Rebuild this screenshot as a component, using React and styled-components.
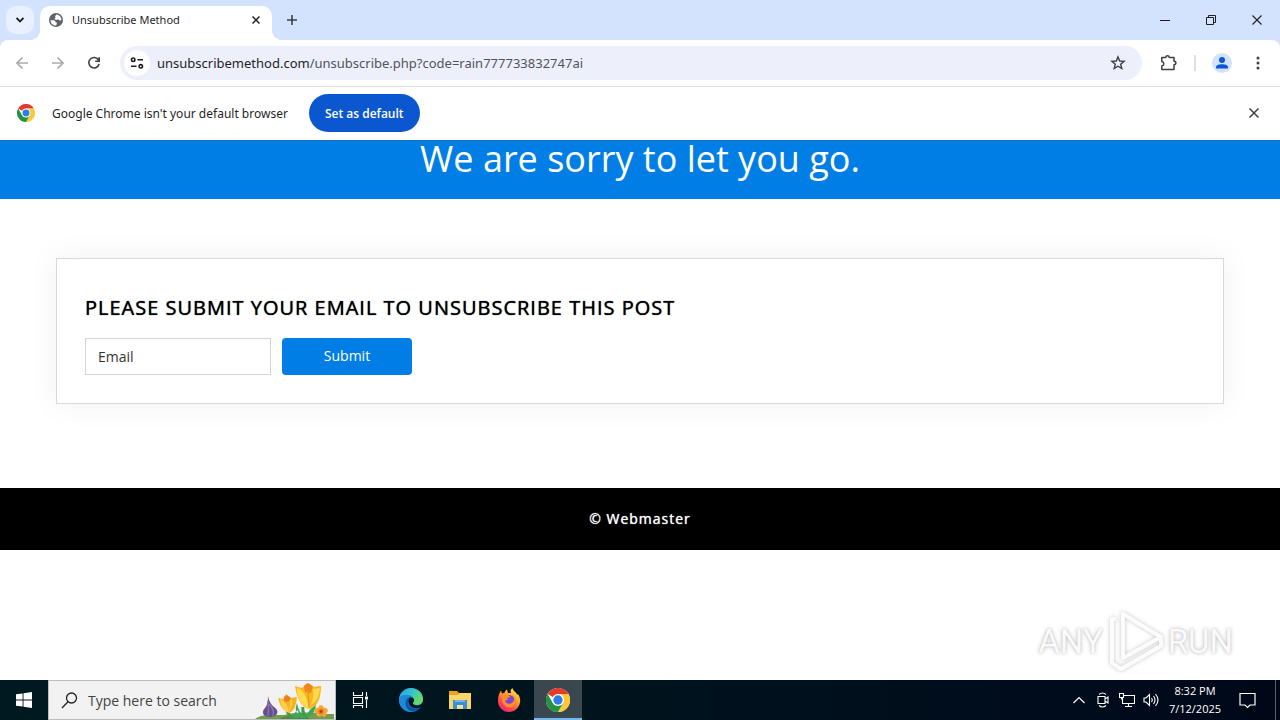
import React from 'react'
import styled, { createGlobalStyle } from 'styled-components'

const GlobalStyle = createGlobalStyle`
  * {
    box-sizing: border-box;
  }
  body {
    margin: 0;
    background: #fff;
    font-family: 'Open Sans', 'Noto Sans', sans-serif;
  }
  button, input {
    font-family: inherit;
    margin: 0;
  }
  svg {
    display: block;
    flex: none;
  }
`

const Screen = styled.div`
  min-height: 100vh;
  display: flex;
  flex-direction: column;
`

const PlainButton = styled.button`
  display: flex;
  align-items: center;
  justify-content: center;
  padding: 0;
  border: 0;
  background: transparent;
  color: ${props => props.$color || '#1f1f1f'};
`

/* tab strip */

const TabStrip = styled.div`
  display: flex;
  align-items: flex-end;
  height: 40px;
  padding-left: 6px;
  background: #d3e3fd;
`

const TabSearch = styled(PlainButton)`
  width: 28px;
  height: 28px;
  margin: 0 6px 6px 0;
  border-radius: 10px;
  background: #e9f1fe;
`

const Tab = styled.div`
  position: relative;
  display: flex;
  align-items: center;
  width: 232px;
  height: 34px;
  padding: 0 8px 6px;
  border-radius: 10px 10px 0 0;
  background: #fff;
  &::before, &::after {
    content: '';
    position: absolute;
    bottom: 0;
    width: 10px;
    height: 10px;
  }
  &::before {
    left: -10px;
    background: radial-gradient(circle at 0 0, transparent 10px, #fff 10px);
  }
  &::after {
    right: -10px;
    background: radial-gradient(circle at 100% 0, transparent 10px, #fff 10px);
  }
`

const TabTitle = styled.span`
  flex: 1;
  margin-left: 8px;
  font-family: 'Noto Sans', sans-serif;
  font-size: 11px;
  line-height: 16px;
  color: #1f1f1f;
`

const TabClose = styled(PlainButton)`
  width: 16px;
  height: 16px;
`

const NewTab = styled(PlainButton)`
  width: 28px;
  height: 28px;
  margin: 0 0 6px 6px;
`

const WindowButtons = styled.div`
  display: flex;
  align-self: stretch;
  margin-left: auto;
`

const WindowButton = styled(PlainButton)`
  width: 46px;
`

/* toolbar */

const ToolbarBack = styled.div`
  background: #d3e3fd;
`

const Toolbar = styled.div`
  display: flex;
  align-items: center;
  height: 47px;
  padding: 0 4px;
  border-bottom: 1px solid #dfe2e8;
  border-radius: 8px 8px 0 0;
  background: #fff;
`

const ToolButton = styled(PlainButton)`
  width: 36px;
  height: 34px;
`

const AddressBar = styled.div`
  flex: 1;
  display: flex;
  align-items: center;
  height: 34px;
  margin: 0 8px;
  padding: 0 6px 0 4px;
  border-radius: 17px;
  background: #edf0fa;
`

const SiteInfo = styled(PlainButton)`
  width: 26px;
  height: 26px;
  border-radius: 50%;
  background: #fff;
`

const Address = styled.div`
  flex: 1;
  margin-left: 7px;
  font-family: 'Noto Sans', sans-serif;
  font-size: 13px;
  line-height: 20px;
  color: #50545c;
  b {
    font-weight: 400;
    color: #1f1f1f;
  }
`

const Divider = styled.div`
  width: 2px;
  height: 16px;
  margin: 0 8px;
  background: #dcdfe8;
`

/* default browser bar */

const InfoBar = styled.div`
  display: flex;
  align-items: center;
  height: 53px;
  padding: 0 18px 1px 17px;
  font-family: 'Noto Sans', sans-serif;
  font-size: 12px;
  color: #1f1f1f;
`

const InfoText = styled.span`
  margin: 0 21px 0 17px;
`

const DefaultButton = styled.button`
  height: 38px;
  padding: 0 16px;
  border: 0;
  border-radius: 19px;
  background: #0b57d0;
  color: #fff;
  font-family: 'Open Sans', sans-serif;
  font-size: 12px;
  font-weight: 600;
`

const InfoClose = styled(PlainButton)`
  width: 16px;
  height: 16px;
  margin-left: auto;
`

/* page */

const Page = styled.main`
  position: relative;
  flex: 1;
  background: #fff;
`

const Banner = styled.header`
  padding-bottom: 21px;
  background: #007ee6;
  box-shadow: inset 0 1px 0 #1a6fb8;
`

const BannerTitle = styled.h1`
  margin: 0;
  font-size: 36px;
  font-weight: 400;
  line-height: 38px;
  text-align: center;
  color: #fff;
`

const Card = styled.section`
  margin: 59px 56px 84px;
  padding: 36px 28px 28px;
  border: 1px solid #d9d9d9;
  background: #fff;
  box-shadow: 0 0 30px rgba(0, 0, 0, .06);
`

const CardTitle = styled.h2`
  margin: 0 0 17px;
  font-size: 20px;
  font-weight: 500;
  line-height: 26px;
  letter-spacing: 1px;
  text-transform: uppercase;
  color: #000;
  text-shadow: 0 0 1px #000;
`

const Form = styled.form`
  display: flex;
  gap: 11px;
`

const EmailInput = styled.input`
  width: 186px;
  height: 37px;
  padding: 0 12px;
  border: 1px solid #d4d4d4;
  border-radius: 0;
  background: #fff;
  font-size: 14px;
  color: #333;
  &::placeholder {
    color: #333;
    opacity: 1;
  }
`

const SubmitButton = styled.button`
  width: 130px;
  height: 37px;
  padding: 0 0 2px;
  border: 0;
  border-radius: 4px;
  background: #007ee6;
  color: #fff;
  font-size: 14px;
`

const Footer = styled.footer`
  padding: 20px;
  background: #000;
  color: #fff;
  font-size: 14px;
  font-weight: 500;
  line-height: 22px;
  letter-spacing: 1px;
  text-align: center;
  text-shadow: 0 0 1px #fff;
`

const Watermark = styled.div`
  position: absolute;
  right: 47px;
  bottom: 6px;
  display: flex;
  align-items: center;
  gap: 4px;
  font-family: Roboto, sans-serif;
  font-size: 33px;
  font-weight: 400;
  line-height: 64px;
  color: #fafafa;
  text-shadow: 0 0 4px #b8b8b8, 0 0 1px #ccc;
`

/* taskbar */

const Taskbar = styled.footer`
  display: flex;
  height: 40px;
  background: linear-gradient(90deg, #001820, #00141d 45%, #000c1c 80%, #000818);
  color: #fff;
`

const StartButton = styled(PlainButton)`
  width: 48px;
`

const SearchBox = styled.label`
  position: relative;
  display: flex;
  align-items: center;
  width: 288px;
  padding-left: 12px;
  border: 1px solid #b9bcbd;
  background: #f2f2f2;
  input {
    flex: 1;
    min-width: 0;
    padding: 0;
    margin-left: 10px;
    border: 0;
    outline: 0;
    background: transparent;
    font-size: 14px;
    color: #444;
  }
  input::placeholder {
    color: #444;
    opacity: 1;
  }
`

const Apps = styled.div`
  display: flex;
  gap: 1px;
  margin-left: 3px;
`

const AppButton = styled(PlainButton)`
  width: 48px;
  ${props => props.$active && `
    background: #3a474e;
    box-shadow: inset 0 -2px 0 #76b9ed;
  `}
`

const Tray = styled.div`
  display: flex;
  align-items: center;
  margin-left: auto;
  padding-right: 4px;
`

const TrayButton = styled(PlainButton)`
  width: 24px;
  height: 40px;
`

const Clock = styled.div`
  width: 64px;
  font-size: 11px;
  line-height: 18px;
  text-align: center;
`

const Notifications = styled(PlainButton)`
  width: 40px;
  height: 40px;
`

const TrayEdge = styled.div`
  width: 1px;
  height: 40px;
  margin-left: 8px;
  background: #59616b;
`

const Stroke = ({ w = 16, h = w, width = 1.5, children }) => (
  <svg width={w} height={h} viewBox={`0 0 ${w} ${h}`} fill="none" stroke="currentColor" strokeWidth={width}>
    {children}
  </svg>
)

const Cross = ({ size = 8, width = 1.7 }) => (
  <Stroke w={size} width={width}>
    <path d={`M0.5 0.5L${size - 0.5} ${size - 0.5}M${size - 0.5} 0.5L0.5 ${size - 0.5}`} />
  </Stroke>
)

const ChromeLogo = ({ size }) => (
  <svg width={size} height={size} viewBox="0 0 48 48">
    <circle cx="24" cy="24" r="24" fill="#fff" />
    <path d="M24 24L3.2 12A24 24 0 0 1 44.8 12H24z" fill="#e33b2e" />
    <path d="M24 12H44.8A24 24 0 0 1 24 48L34.4 30z" fill="#fcc934" />
    <path d="M3.2 12L13.6 30 24 36 34.4 30 24 48A24 24 0 0 1 3.2 12z" fill="#229342" />
    <circle cx="24" cy="24" r="12" fill="#fff" />
    <circle cx="24" cy="24" r="9.3" fill="#2f7de9" />
  </svg>
)

const Globe = () => (
  <svg width="16" height="16" viewBox="0 0 16 16">
    <circle cx="8" cy="8" r="7" fill="#5f6368" />
    <path d="M2.6 8.2L5.4 8.3C7 8.4 7.6 9.2 7.4 10.3L9 10.8 8.2 13.4C5 13.7 2.5 11.4 2.6 8.2zM8.4 2.5L7 4.2 7.7 5.5 6.3 6.9 8.3 8.1 10.1 7.2 11.8 8.5 13.4 8.2C13.5 5.3 11.4 2.7 8.4 2.5z" fill="#fff" />
  </svg>
)

const Tulips = () => (
  <svg width="80" height="38" viewBox="0 0 80 38">
    <path d="M0 38C8 32 20 34 29 34C41 31 57 31 68 33L79 33V38z" fill="#6f9e50" />
    <path d="M24 38C35 33 47 34 56 38z" fill="#568443" />
    <path d="M48 26Q47 32 51 37M32 29Q33 34 38 37" fill="none" stroke="#3f9a4a" strokeWidth="3" />
    <path d="M51 37Q53 28 61 24Q60 34 51 37M38 37Q39 31 43 29L44 37M50 37Q43 30 42 22Q38 31 46 37" fill="#39a85a" />
    <path d="M13 15Q14 22 19 26C26 31 21 36 15 36C8 36 6 31 10 27Q13 24 13 15" fill="#67508f" />
    <path d="M13 20Q14 28 13 35M14 23Q20 29 18 35" fill="none" stroke="#8d76ad" strokeWidth="1.3" />
    <path d="M23 17L28 18 31 13 35 17 42 16Q41 30 34 32Q26 30 23 17" fill="#f5b324" />
    <path d="M25 18Q33 21 34 32Q26 29 25 18M36 17Q39 22 34 31" fill="#ffcf4b" />
    <path d="M29 16L32 14 36 17 33 21 29 20z" fill="#ef7e22" />
    <path d="M40 5L47 7 52 2 57 6 66 5Q66 25 54 28Q43 25 40 5" fill="#f7b71f" />
    <path d="M42 7Q51 9 54 28Q42 22 42 7M58 8L65 7Q64 20 55 25Q60 17 58 8" fill="#ffda4e" />
    <path d="M49 5L53 2 58 5 56 12 50 11z" fill="#ee8522" />
    <path d="M53 9L54 26" stroke="#e9991a" strokeWidth="1.2" />
    <g fill="#f5a633">
      <circle cx="66" cy="27" r="2.7" /><circle cx="70" cy="29.500" r="2.7" /><circle cx="69" cy="33" r="2.7" /><circle cx="64" cy="33" r="2.7" /><circle cx="62" cy="29.500" r="2.7" />
    </g>
    <circle cx="66" cy="30.500" r="2.800" fill="#e87a25" />
    <circle cx="66" cy="30.500" r="1.2" fill="#8a4a1c" />
  </svg>
)

const EdgeLogo = () => (
  <svg width="24" height="24" viewBox="0 0 24 24">
    <defs>
      <linearGradient id="edgeTop" x1="0" y1="0" x2="1" y2="0.5">
        <stop offset="0" stopColor="#1f9ce8" />
        <stop offset="0.55" stopColor="#37c5ca" />
        <stop offset="1" stopColor="#65dc61" />
      </linearGradient>
    </defs>
    <circle cx="12" cy="12" r="12" fill="#136fc4" />
    <path d="M0 11C1 4 6 0 12 0C19 0 24 5 24 11C24 15 21 17 18 17C15 17 13.500 16 14 14.500C16 12 14.500 8.500 10.500 8.300C6 7.700 1 9 0 15z" fill="url(#edgeTop)" />
    <path d="M1 9C4 6 11 6 14 9C9 7.500 5.500 12 7 17C8 21 12 24 16 23.300C8 26 0 20 0 12z" fill="#1b8ade" />
    <path d="M10 10C7 14 9 20 15 20.500C18 21 20.500 20 22.500 18.300C18 25 9.500 25 7 18C6 14 7 10.500 10 10" fill="#0c54a0" />
    <path d="M11 9.500C15 9 16 12 14.300 14.300C13 16.500 16 18 19.500 17.200C22 16.700 23 15.500 24 14C24 16 23 18.500 22.200 19C16 22 10 19 9.500 14C9.300 12 10 10.300 11 9.500" fill="#001820" />
  </svg>
)

const Folder = () => (
  <svg width="22" height="20" viewBox="0 0 22 20">
    <path d="M0 1H8L10 3H22V18H0z" fill="#e8a520" />
    <path d="M0 5H9L11 3H22V19H0z" fill="#fdd66a" />
    <path d="M4 10H18V19H14V15H8V19H4z" fill="#3d8fd0" />
    <path d="M6 10H16V12H6z" fill="#70b9e8" />
    <path d="M8 15H14V19H8z" fill="#f5dda0" />
  </svg>
)

const FirefoxLogo = () => (
  <svg width="24" height="24" viewBox="0 0 24 24">
    <defs>
      <linearGradient id="fox" x1="0.8" y1="0" x2="0.2" y2="1">
        <stop offset="0" stopColor="#ffec45" />
        <stop offset="0.4" stopColor="#ff9a2c" />
        <stop offset="0.75" stopColor="#ff4055" />
        <stop offset="1" stopColor="#e5227f" />
      </linearGradient>
    </defs>
    <path d="M2.500 5L4 2.500 5 5.500 7.500 4.800C8 3 9 2 10 1.500L11 5 14 5C13 3 14 1 15.500 0C16 3 19 4 20.500 7L21 6C23 9 23.500 12 23 14.500C22 20 17.500 24 12 24C5.500 24 1 19 1 13C1 10 1.500 7 2.500 5z" fill="url(#fox)" />
    <circle cx="12" cy="12.500" r="5.500" fill="#7747da" />
    <path d="M5 7C8 5 12 7 13.500 9L10 10C12 12 9 13 8 12C8 16 13 17 16 14C18 12 17 8 15 7C20 8 20 17 15 19C9 21 4 16 5 7z" fill="#ff8d2b" />
  </svg>
)

const PlayShape = styled.svg`
  overflow: visible;
  filter: drop-shadow(0 0 2px #c4c4c4);
`

const PlayMark = () => (
  <PlayShape width="57" height="64" viewBox="0 0 57 64">
    <g fill="none" stroke="#fcfcfc" strokeWidth="4" strokeLinejoin="round">
      <path d="M16 4V48L54 27z" />
      <path d="M9 9H5V53L14 59 54 36V29" />
    </g>
  </PlayShape>
)

const App = () => {
  return (
    <Screen>
      <GlobalStyle />
      <TabStrip>
        <TabSearch aria-label="Search tabs">
          <Stroke w={8} h={6} width={1.8}><path d="M0.500 1L4 4.500 7.500 1" /></Stroke>
        </TabSearch>
        <Tab>
          <Globe />
          <TabTitle>Unsubscribe Method</TabTitle>
          <TabClose aria-label="Close tab"><Cross width={1.5} /></TabClose>
        </Tab>
        <NewTab aria-label="New tab" $color="#3c4043">
          <Stroke w={10} width={1.6}><path d="M5 0V10M0 5H10" /></Stroke>
        </NewTab>
        <WindowButtons>
          <WindowButton aria-label="Minimize"><Stroke w={10} width={1}><path d="M0 5.500H10" /></Stroke></WindowButton>
          <WindowButton aria-label="Restore">
            <Stroke w={10} width={1}><path d="M0.500 2.500H7.500V9.500H0.500zM2.500 2.500V0.500H9.500V7.500H7.500" /></Stroke>
          </WindowButton>
          <WindowButton aria-label="Close"><Cross size={10} width={1.1} /></WindowButton>
        </WindowButtons>
      </TabStrip>

      <ToolbarBack>
        <Toolbar>
          <ToolButton aria-label="Back" $color="#a9abae"><Stroke w={12} width={1.6}><path d="M12 6H1M6.500 0.500L1 6 6.500 11.500" /></Stroke></ToolButton>
          <ToolButton aria-label="Forward" $color="#a9abae"><Stroke w={12} width={1.6}><path d="M0 6H11M5.500 0.500L11 6 5.500 11.500" /></Stroke></ToolButton>
          <ToolButton aria-label="Reload" $color="#3c4043">
            <Stroke w={14} width={1.6}><path d="M11.600 4.200A5.200 5.200 0 1 0 12.100 8M12.200 1.200V5.200H8.200" /></Stroke>
          </ToolButton>
          <AddressBar>
            <SiteInfo aria-label="Site information">
              <Stroke w={14} h={12} width={1.6}>
                <circle cx="3.200" cy="2.700" r="1.700" /><path d="M7.500 2.700H13M1 9.300H6.500" /><circle cx="10.800" cy="9.300" r="1.700" />
              </Stroke>
            </SiteInfo>
            <Address><b>unsubscribemethod.com</b>/unsubscribe.php?code=rain777733832747ai</Address>
            <ToolButton aria-label="Bookmark" $color="#3c4043">
              <Stroke w={16} width={1.4}><path d="M8 1.900L9.700 6 14.100 6.300 10.700 9.200 11.800 13.500 8 11.200 4.200 13.500 5.300 9.200 1.900 6.300 6.300 6z" /></Stroke>
            </ToolButton>
          </AddressBar>
          <ToolButton aria-label="Extensions" $color="#3c4043">
            <Stroke w={18} width={1.5}>
              <path d="M2.800 3.500H6.800C6.800 1.200 10.200 1.200 10.200 3.500H15V7.300C17.500 7.300 17.500 10.700 15 10.700V15.500H2.800V12C5.500 11.500 5.500 8 2.800 7.500z" strokeLinejoin="round" />
            </Stroke>
          </ToolButton>
          <Divider />
          <ToolButton aria-label="Profile">
            <svg width="20" height="20" viewBox="0 0 20 20">
              <circle cx="10" cy="10" r="10" fill="#d3e3fd" />
              <circle cx="10" cy="7" r="3" fill="#0b57d0" />
              <path d="M4 15.500V14.500C4 12 7 11.300 10 11.300S16 12 16 14.500V15.500z" fill="#0b57d0" />
            </svg>
          </ToolButton>
          <ToolButton aria-label="Menu">
            <svg width="4" height="14" viewBox="0 0 4 14" fill="#3c4043"><circle cx="2" cy="2" r="1.500" /><circle cx="2" cy="7" r="1.500" /><circle cx="2" cy="12" r="1.500" /></svg>
          </ToolButton>
        </Toolbar>
      </ToolbarBack>

      <InfoBar>
        <ChromeLogo size={18} />
        <InfoText>Google Chrome isn't your default browser</InfoText>
        <DefaultButton>Set as default</DefaultButton>
        <InfoClose aria-label="Dismiss" $color="#3c4043"><Cross size={10} width={1.5} /></InfoClose>
      </InfoBar>

      <Page>
        <Banner>
          <BannerTitle>We are sorry to let you go.</BannerTitle>
        </Banner>
        <Card>
          <CardTitle>Please submit your email to unsubscribe this post</CardTitle>
          <Form onSubmit={e => e.preventDefault()}>
            <EmailInput type="email" placeholder="Email" aria-label="Email" />
            <SubmitButton type="submit">Submit</SubmitButton>
          </Form>
        </Card>
        <Footer>© Webmaster</Footer>
        <Watermark>
          <span>ANY</span>
          <PlayMark />
          <span>RUN</span>
        </Watermark>
      </Page>

      <Taskbar>
        <StartButton aria-label="Start" $color="#fff">
          <svg width="16" height="16" viewBox="0 0 16 16" fill="#fff"><path d="M0 2.300L6.600 1.400V7.500H0zM7.500 1.200L16 0V7.500H7.500zM0 8.500H6.600V14.600L0 13.700zM7.500 8.500H16V16L7.500 14.800z" /></svg>
        </StartButton>
        <SearchBox>
          <Stroke w={17} width={1.3}><g stroke="#222"><circle cx="10.500" cy="6" r="5" /><path d="M7 9.800L1 16" /></g></Stroke>
          <input type="text" placeholder="Type here to search" aria-label="Type here to search" />
          <Tulips />
        </SearchBox>
        <AppButton aria-label="Task view" $color="#fff">
          <Stroke w={16} width={1.1}><path d="M1.500 0V3.500H10.500V0M1.500 5.500H10.500V11.500H1.500zM1.500 16V13.500H10.500V16M14.500 0V4M14.500 8V16" /><path d="M13 6H16" strokeWidth="3" /></Stroke>
        </AppButton>
        <Apps>
          <AppButton aria-label="Edge"><EdgeLogo /></AppButton>
          <AppButton aria-label="File Explorer"><Folder /></AppButton>
          <AppButton aria-label="Firefox"><FirefoxLogo /></AppButton>
          <AppButton aria-label="Chrome" $active><ChromeLogo size={24} /></AppButton>
        </Apps>
        <Tray>
          <TrayButton aria-label="Hidden icons" $color="#fff"><Stroke w={12} h={8} width={1.2}><path d="M0.500 7L6 1.500 11.500 7" /></Stroke></TrayButton>
          <TrayButton aria-label="Meet now" $color="#fff">
            <Stroke w={12} h={16} width={1.1}><path d="M1 4.500H8V11.500H1zM8 7L11 5V11L8 9M2 2.500Q5.500 -0.500 9 2.500M2 13.500Q5.500 16.500 9 13.500" /></Stroke>
          </TrayButton>
          <TrayButton aria-label="Network" $color="#fff">
            <Stroke w={16} h={14} width={1.1}><path d="M5 2.500H15.500V10.500H3.500V5M9.500 10.500V13M6 13.500H13M0.500 0.500H4.500V4.500H0.500zM2.500 4.500V6.500" /></Stroke>
          </TrayButton>
          <TrayButton aria-label="Volume" $color="#fff">
            <Stroke w={17} h={14} width={1.1}><path d="M1 5H3L6.500 1.500V12.500L3 9H1zM8.500 5Q10 7 8.500 9M10.500 3Q13.500 7 10.500 11M12.500 1Q17.500 7 12.500 13" /></Stroke>
          </TrayButton>
          <Clock>8:32 PM<br />7/12/2025</Clock>
          <Notifications aria-label="Notifications" $color="#fff">
            <Stroke w={17} width={1.2}><path d="M1 1.500H16V13H11L8.500 15.500 6 13H1z" /></Stroke>
          </Notifications>
          <TrayEdge />
        </Tray>
      </Taskbar>
    </Screen>
  )
}

export default App
